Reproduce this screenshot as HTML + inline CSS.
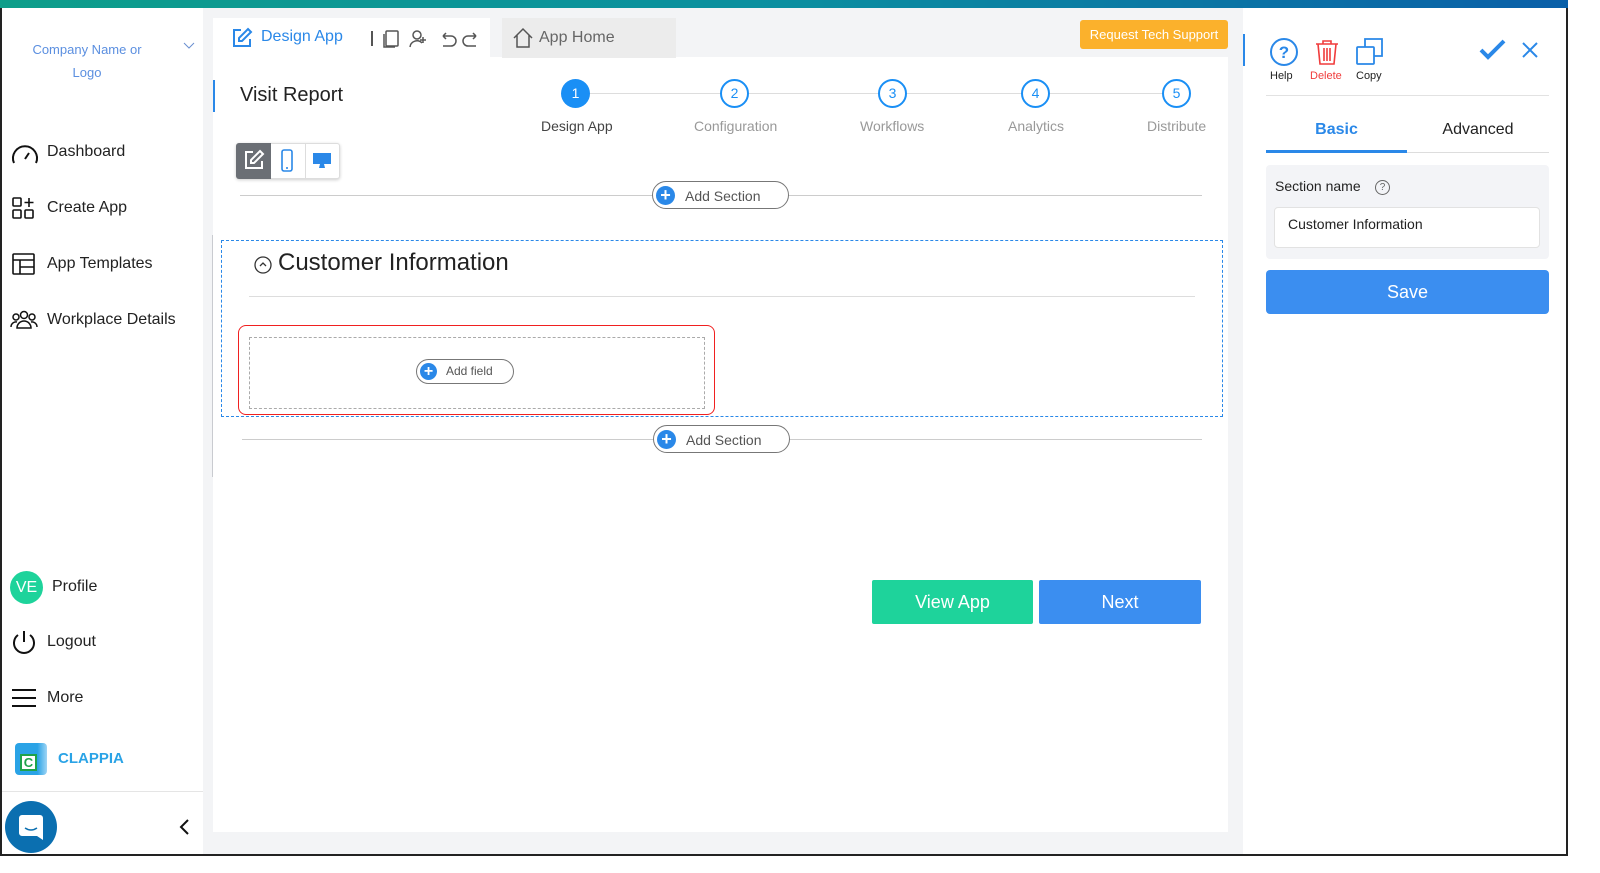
<!DOCTYPE html>
<html><head><meta charset="utf-8"><style>
*{box-sizing:border-box;margin:0;padding:0}
body{width:1600px;height:873px;overflow:hidden;background:#fff;font-family:"Liberation Sans",sans-serif;position:relative;color:#222}
.a{position:absolute}
.t{white-space:nowrap}
</style></head><body>
<div class="a" style="left:0;top:0;width:1568px;height:856px;border:2px solid #222;border-top:none;background:#f3f4f6"></div>
<div class="a" style="left:0;top:0;width:1568px;height:8px;background:linear-gradient(90deg,#0d9e8a,#0a8fa0 50%,#0a5fa8)"></div>
<!-- sidebar -->
<div class="a" style="left:2px;top:8px;width:201px;height:846px;background:#fff"></div>
<div class="a t" style="left:27px;top:38px;font-size:13px;color:#5b8fe0;text-align:center;width:120px;line-height:23px">Company Name or<br>Logo</div>
<svg class="a" style="left:183px;top:42px" width="12" height="8"><path d="M1 1l5 5 5-5" stroke="#6a8fd0" fill="none"/></svg>
<svg class="a" style="left:10px;top:141px" width="30" height="26" fill="none" stroke="#111" stroke-width="2"><path d="M4 22A12 12 0 1 1 26 22"/><path d="M15 18l4-6"/></svg>
<div class="a t" style="left:47px;top:143px;font-size:16px">Dashboard</div>
<svg class="a" style="left:12px;top:197px" width="24" height="24" fill="none" stroke="#111" stroke-width="1.6"><rect x="1" y="1" width="8" height="8" rx="1"/><rect x="1" y="13" width="8" height="8" rx="1"/><rect x="13" y="13" width="8" height="8" rx="1"/><path d="M17 1v9M12.5 5.5h9"/></svg>
<div class="a t" style="left:47px;top:199px;font-size:16px">Create App</div>
<svg class="a" style="left:12px;top:253px" width="24" height="24" fill="none" stroke="#111" stroke-width="1.6"><rect x="1" y="1" width="21" height="20" rx="1"/><path d="M1 7h21M8 7v14M8 14h14"/></svg>
<div class="a t" style="left:47px;top:255px;font-size:16px">App Templates</div>
<svg class="a" style="left:10px;top:309px" width="28" height="22" fill="none" stroke="#111" stroke-width="1.5"><circle cx="14" cy="6" r="3.5"/><circle cx="6" cy="8" r="3"/><circle cx="22" cy="8" r="3"/><path d="M7 19a7 7 0 0 1 14 0zM1 18a5 5 0 0 1 6-5M27 18a5 5 0 0 0-6-5"/></svg>
<div class="a t" style="left:47px;top:311px;font-size:16px">Workplace Details</div>
<div class="a" style="left:10px;top:571px;width:33px;height:33px;border-radius:50%;background:#1ed39b;color:#fff;font-size:16px;text-align:center;line-height:33px">VE</div>
<div class="a t" style="left:52px;top:578px;font-size:16px">Profile</div>
<svg class="a" style="left:11px;top:629px" width="26" height="26" fill="none" stroke="#111" stroke-width="2"><path d="M13 2v11"/><path d="M7 6a10 10 0 1 0 12 0"/></svg>
<div class="a t" style="left:47px;top:633px;font-size:16px">Logout</div>
<svg class="a" style="left:11px;top:688px" width="26" height="20" stroke="#111" stroke-width="2"><path d="M1 2h24M1 10h24M1 18h24"/></svg>
<div class="a t" style="left:47px;top:689px;font-size:16px">More</div>
<div class="a" style="left:15px;top:743px;width:32px;height:32px;border-radius:4px;background:linear-gradient(90deg,#2aa3e6 70%,#9fd5f5)"></div>
<div class="a" style="left:20px;top:754px;width:17px;height:17px;background:#fff;border:2px solid #1ea34a;color:#1ea34a;font-weight:bold;font-size:13px;line-height:13px;text-align:center">C</div>
<div class="a t" style="left:58px;top:750px;font-size:15px;font-weight:bold;color:#2aa3e6">CLAPPIA</div>
<div class="a" style="left:2px;top:791px;width:201px;height:1px;background:#e5e5e5"></div>
<div class="a" style="left:5px;top:801px;width:52px;height:52px;border-radius:50%;background:#0b6fb0"></div>
<svg class="a" style="left:19px;top:815px" width="24" height="26"><path d="M3 0h18a3 3 0 0 1 3 3v22l-6-4H3a3 3 0 0 1-3-3V3a3 3 0 0 1 3-3z" fill="#fff"/><path d="M6 13q6 4 12 0" stroke="#0b6fb0" stroke-width="1.5" fill="none"/></svg>
<svg class="a" style="left:178px;top:818px" width="12" height="18" fill="none" stroke="#111" stroke-width="2"><path d="M10 2L3 9l7 7"/></svg>
<div class="a" style="left:212px;top:235px;width:3px;height:242px;background:#c9cbd0"></div>
<!-- main -->
<div class="a" style="left:213px;top:57px;width:1015px;height:775px;background:#fff"></div>
<div class="a" style="left:213px;top:18px;width:277px;height:40px;background:#fff"></div>
<div class="a" style="left:502px;top:18px;width:174px;height:40px;background:#ececec"></div>
<svg class="a" style="left:231px;top:27px" width="22" height="22" fill="none" stroke="#2a88e8" stroke-width="2"><path d="M10 3H3v16h16v-7"/><path d="M17 2l3 3-9 9H8v-3z"/></svg>
<div class="a t" style="left:261px;top:28px;font-size:16px;color:#2a88e8">Design App</div>
<div class="a" style="left:371px;top:31px;width:2px;height:15px;background:#555"></div>
<svg class="a" style="left:383px;top:28px" width="96" height="22" fill="none" stroke="#555" stroke-width="1.5"><rect x="3" y="3" width="12" height="15" rx="1"/><path d="M1 6v13h11"/><circle cx="34" cy="7" r="4"/><path d="M27 19a7 7 0 0 1 12-4M40 9v6M37 12h6"/><path d="M60 8h8a5 5 0 0 1 0 10h-8M60 8l3-3M60 8l3 3"/><path d="M93 8h-8a5 5 0 0 0 0 10h8M93 8l-3-3M93 8l-3 3"/></svg>
<svg class="a" style="left:512px;top:27px" width="22" height="22" fill="none" stroke="#555" stroke-width="1.5"><path d="M2 11L11 2l9 9M5 8v12h12V8"/></svg>
<div class="a t" style="left:539px;top:29px;font-size:16px;color:#666">App Home</div>
<div class="a t" style="left:1080px;top:20px;width:148px;height:29px;background:#fbb12c;border-radius:3px;color:#fff;font-size:13px;text-align:center;line-height:29px">Request Tech Support</div>
<div class="a" style="left:213px;top:80px;width:2px;height:32px;background:#2a88e8"></div>
<div class="a t" style="left:240px;top:84px;font-size:20px">Visit Report</div>
<!-- stepper -->
<div class="a" style="left:590px;top:93px;width:590px;height:1px;background:#ddd"></div>
<div class="a" style="left:561px;top:79px;width:29px;height:29px;border-radius:50%;background:#1a8ff5;color:#fff;font-size:14px;text-align:center;line-height:29px">1</div>
<div class="a" style="left:720px;top:79px;width:29px;height:29px;border-radius:50%;background:#fff;border:2px solid #1a8ff5;color:#1a8ff5;font-size:14px;text-align:center;line-height:25px">2</div>
<div class="a" style="left:878px;top:79px;width:29px;height:29px;border-radius:50%;background:#fff;border:2px solid #1a8ff5;color:#1a8ff5;font-size:14px;text-align:center;line-height:25px">3</div>
<div class="a" style="left:1021px;top:79px;width:29px;height:29px;border-radius:50%;background:#fff;border:2px solid #1a8ff5;color:#1a8ff5;font-size:14px;text-align:center;line-height:25px">4</div>
<div class="a" style="left:1162px;top:79px;width:29px;height:29px;border-radius:50%;background:#fff;border:2px solid #1a8ff5;color:#1a8ff5;font-size:14px;text-align:center;line-height:25px">5</div>
<div class="a t" style="left:541px;top:118px;font-size:14px;color:#444">Design App</div>
<div class="a t" style="left:694px;top:118px;font-size:14px;color:#999">Configuration</div>
<div class="a t" style="left:860px;top:118px;font-size:14px;color:#999">Workflows</div>
<div class="a t" style="left:1008px;top:118px;font-size:14px;color:#999">Analytics</div>
<div class="a t" style="left:1147px;top:118px;font-size:14px;color:#999">Distribute</div>
<!-- view toggle -->
<div class="a" style="left:236px;top:143px;width:104px;height:36px;border:1px solid #ddd;border-radius:3px;box-shadow:0 1px 3px rgba(0,0,0,.2);background:#fff"></div>
<div class="a" style="left:236px;top:143px;width:35px;height:36px;background:#6b6f75;border-radius:3px 0 0 3px"></div>
<div class="a" style="left:305px;top:143px;width:1px;height:36px;background:#ddd"></div>
<svg class="a" style="left:243px;top:149px" width="22" height="22" fill="none" stroke="#fff" stroke-width="2"><path d="M10 3H3v16h16v-7"/><path d="M17 2l3 3-9 9H8v-3z"/></svg>
<svg class="a" style="left:280px;top:149px" width="14" height="24" fill="none" stroke="#2a88e8" stroke-width="1.6"><rect x="2" y="1" width="10" height="21" rx="2"/><path d="M6 19h2"/></svg>
<svg class="a" style="left:312px;top:152px" width="20" height="18"><rect x="1" y="1" width="18" height="11" fill="#2a88e8"/><path d="M8 12h4l1 4H7z" fill="#2a88e8"/></svg>
<!-- add section 1 -->
<div class="a" style="left:240px;top:195px;width:962px;height:1px;background:#ccc"></div>
<div class="a" style="left:652px;top:181px;width:137px;height:28px;border:1px solid #777;border-radius:14px;background:#fff"></div>
<div class="a" style="left:656px;top:186px;width:19px;height:19px;border-radius:50%;background:#2a88e8;color:#fff;text-align:center;line-height:19px;font-size:18px;font-weight:bold">+</div>
<div class="a t" style="left:685px;top:188px;font-size:14px;color:#555">Add Section</div>
<!-- section -->
<div class="a" style="left:221px;top:240px;width:1002px;height:177px;border:1px dashed #2a88e8"></div>
<svg class="a" style="left:254px;top:256px" width="18" height="18" fill="none" stroke="#333" stroke-width="1.3"><circle cx="9" cy="9" r="8"/><path d="M6 10l3-3 3 3"/></svg>
<div class="a t" style="left:278px;top:249px;font-size:24px">Customer Information</div>
<div class="a" style="left:249px;top:296px;width:946px;height:1px;background:#ddd"></div>
<div class="a" style="left:238px;top:325px;width:477px;height:90px;border:1.5px solid #f02020;border-radius:8px"></div>
<div class="a" style="left:249px;top:337px;width:456px;height:72px;border:1px dashed #aaa"></div>
<div class="a" style="left:416px;top:359px;width:98px;height:25px;border:1px solid #777;border-radius:13px;background:#fff"></div>
<div class="a" style="left:420px;top:363px;width:17px;height:17px;border-radius:50%;background:#2a88e8;color:#fff;text-align:center;line-height:17px;font-size:16px;font-weight:bold">+</div>
<div class="a t" style="left:446px;top:364px;font-size:12px;color:#555">Add field</div>
<!-- add section 2 -->
<div class="a" style="left:242px;top:439px;width:960px;height:1px;background:#ccc"></div>
<div class="a" style="left:653px;top:425px;width:137px;height:28px;border:1px solid #777;border-radius:14px;background:#fff"></div>
<div class="a" style="left:657px;top:430px;width:19px;height:19px;border-radius:50%;background:#2a88e8;color:#fff;text-align:center;line-height:19px;font-size:18px;font-weight:bold">+</div>
<div class="a t" style="left:686px;top:432px;font-size:14px;color:#555">Add Section</div>
<!-- buttons -->
<div class="a" style="left:872px;top:580px;width:161px;height:44px;background:#1ed39b;border-radius:2px;color:#fff;font-size:18px;text-align:center;line-height:44px">View App</div>
<div class="a" style="left:1039px;top:580px;width:162px;height:44px;background:#3b8ef0;border-radius:2px;color:#fff;font-size:18px;text-align:center;line-height:44px">Next</div>
<!-- right panel -->
<div class="a" style="left:1243px;top:8px;width:323px;height:846px;background:#fff"></div>
<div class="a" style="left:1243px;top:34px;width:2px;height:32px;background:#2a88e8"></div>
<svg class="a" style="left:1269px;top:37px" width="30" height="30" fill="none" stroke="#2a88e8" stroke-width="2"><circle cx="15" cy="15" r="13"/><text x="15" y="21" font-size="17" font-weight="bold" text-anchor="middle" fill="#2a88e8" stroke="none" font-family="Liberation Sans">?</text></svg>
<svg class="a" style="left:1313px;top:38px" width="28" height="28" fill="none" stroke="#f03c3c" stroke-width="1.6"><path d="M3 6h22M10 6V3h8v3M5 6l2 20h14l2-20M11 10v13M14 10v13M17 10v13"/></svg>
<svg class="a" style="left:1356px;top:38px" width="28" height="28" fill="none" stroke="#2a88e8" stroke-width="1.8"><rect x="1" y="9" width="17" height="17" rx="1"/><path d="M9 9V1h17v17h-8"/></svg>
<div class="a t" style="left:1270px;top:70px;font-size:11px">Help</div>
<div class="a t" style="left:1310px;top:70px;font-size:11px;color:#f03c3c">Delete</div>
<div class="a t" style="left:1356px;top:70px;font-size:11px">Copy</div>
<svg class="a" style="left:1479px;top:39px" width="27" height="22" fill="none" stroke="#2a88e8" stroke-width="4"><path d="M2 11l7 7L25 2"/></svg>
<svg class="a" style="left:1522px;top:42px" width="16" height="16" stroke="#2a88e8" stroke-width="2"><path d="M1 1l14 14M15 1L1 15"/></svg>
<div class="a" style="left:1266px;top:95px;width:283px;height:1px;background:#e2e2e2"></div>
<div class="a t" style="left:1266px;top:121px;width:141px;text-align:center;font-size:16px;font-weight:bold;color:#2a88e8">Basic</div>
<div class="a t" style="left:1407px;top:121px;width:142px;text-align:center;font-size:16px">Advanced</div>
<div class="a" style="left:1266px;top:152px;width:283px;height:1px;background:#ddd"></div>
<div class="a" style="left:1266px;top:150px;width:141px;height:3px;background:#2a88e8"></div>
<div class="a" style="left:1266px;top:165px;width:283px;height:94px;background:#f3f4f7;border-radius:4px"></div>
<div class="a t" style="left:1275px;top:178px;font-size:14px">Section name</div>
<div class="a" style="left:1375px;top:180px;width:15px;height:15px;border:1.3px solid #666;border-radius:50%;font-size:10px;color:#666;text-align:center;line-height:13px">?</div>
<div class="a" style="left:1274px;top:207px;width:266px;height:41px;background:#fff;border:1px solid #e2e2e2;border-radius:4px"></div>
<div class="a t" style="left:1288px;top:216px;font-size:14px">Customer Information</div>
<div class="a" style="left:1266px;top:270px;width:283px;height:44px;background:#3b8ef0;border-radius:4px;color:#fff;font-size:18px;text-align:center;line-height:44px">Save</div>
</body></html>
